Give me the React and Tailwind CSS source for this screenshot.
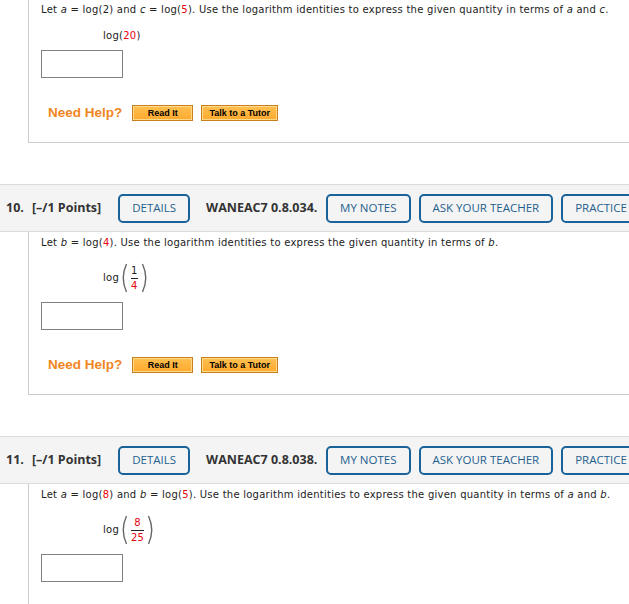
const BODY =
  "font-['DejaVu_Sans',sans-serif] text-[10px] leading-[12px] tracking-[0.25px] text-[#222]";
const HEAD = "font-['Open_Sans',sans-serif]";

const Red = ({ children }) => <span className="text-[#e8000b]">{children}</span>;
const V = ({ children }) => <i>{children}</i>;

const questions = [
  {
    id: 9,
    hideHeader: true,
    prompt: (
      <>
        Let <V>a</V> = log(2) and <V>c</V> = log(<Red>5</Red>). Use the logarithm
        identities to express the given quantity in terms of <V>a</V> and <V>c</V>.
      </>
    ),
    math: (
      <div className="mt-[14px] ml-[62px]">
        log(<Red>20</Red>)
      </div>
    ),
    inputGap: "mt-[8px]",
  },
  {
    id: 10,
    code: "WANEAC7 0.8.034.",
    prompt: (
      <>
        Let <V>b</V> = log(<Red>4</Red>). Use the logarithm identities to express
        the given quantity in terms of <V>b</V>.
      </>
    ),
    math: <Frac num="1" den={<Red>4</Red>} />,
    inputGap: "mt-[9px]",
  },
  {
    id: 11,
    code: "WANEAC7 0.8.038.",
    prompt: (
      <>
        Let <V>a</V> = log(<Red>8</Red>) and <V>b</V> = log(<Red>5</Red>). Use the
        logarithm identities to express the given quantity in terms of <V>a</V> and{" "}
        <V>b</V>.
      </>
    ),
    math: <Frac num={<Red>8</Red>} den={<Red>25</Red>} />,
    inputGap: "mt-[9px]",
    noHelp: true,
  },
];

function Paren({ right = false }) {
  return (
    <svg width="7" height="30" viewBox="0 0 7 30" className="shrink-0">
      <path
        d={right ? "M1.5 1 Q8 15 1.5 29" : "M5.5 1 Q-1 15 5.5 29"}
        fill="none"
        stroke="#666"
        strokeWidth="1.4"
      />
    </svg>
  );
}

function Frac({ num, den }) {
  return (
    <div className="mt-[14px] ml-[62px] flex h-[30px] items-center">
      <span className="mr-[2px]">log</span>
      <Paren />
      <div className="mx-[3px] flex flex-col items-center">
        <span className="leading-[12px]">{num}</span>
        <span className="my-[1px] h-px self-stretch bg-[#222]" />
        <span className="leading-[11px]">{den}</span>
      </div>
      <Paren right />
    </div>
  );
}

function OutlineBtn({ children, className = "" }) {
  return (
    <button
      className={`h-[29px] shrink-0 whitespace-nowrap rounded-[5px] border-2 border-[#19639a] px-3 text-[11.5px] text-[#255f8e] ${className}`}
    >
      {children}
    </button>
  );
}

function HelpBtn({ children, w }) {
  return (
    <button
      className={`${w} h-[16px] border border-[#c97f1c] bg-gradient-to-b from-[#ffc04f] to-[#ffa92c] p-0 shadow-[inset_0_0_0_1px_#ffd98c] font-['Liberation_Sans',sans-serif] text-[9px] font-bold leading-[14px] text-black`}
    >
      {children}
    </button>
  );
}

function Header({ q }) {
  return (
    <div className={`flex h-[48px] items-center border-y border-[#dcdcdc] bg-[#f4f4f4] pl-[6px] ${HEAD}`}>
      <span className="shrink-0 whitespace-nowrap text-[12.5px] font-bold text-[#333]">
        {q.id}.
      </span>
      <span className="ml-[8px] shrink-0 whitespace-nowrap text-[12.5px] font-bold text-[#333]">
        [–/1 Points]
      </span>
      <OutlineBtn className="ml-[17px]">DETAILS</OutlineBtn>
      <span className="ml-[16px] w-[112px] shrink-0 whitespace-nowrap text-[12.5px] font-bold text-[#333]">
        {q.code}
      </span>
      <OutlineBtn className="ml-[8px]">MY NOTES</OutlineBtn>
      <OutlineBtn className="ml-[8px]">ASK YOUR TEACHER</OutlineBtn>
      <OutlineBtn className="ml-[8px]">
        PRACTICE <span className="text-[#f0861e]">ANOTHER</span>
      </OutlineBtn>
    </div>
  );
}

function Question({ q }) {
  return (
    <section className={q.hideHeader ? "-mt-px" : "mt-[41px]"}>
      {!q.hideHeader && <Header q={q} />}
      <div className={`ml-[28px] border-l border-b border-[#cccccc] pl-3 pt-[5px] ${q.noHelp ? "pb-[40px]" : "pb-[21px]"} ${BODY}`}>
        <p className="whitespace-nowrap">{q.prompt}</p>
        {q.math}
        <div className={`${q.inputGap} h-[28px] w-[82px] border border-[#808080] bg-white`} />
        {!q.noHelp && (
          <div className="ml-[7px] mt-[27px] flex h-[16px] items-center tracking-normal">
            <span className="font-['Liberation_Sans',sans-serif] text-[13.5px] font-bold text-[#f0861e]">
              Need Help?
            </span>
            <div className="ml-[10px] flex gap-2">
              <HelpBtn w="w-[61px]">Read It</HelpBtn>
              <HelpBtn w="w-[77px]">Talk to a Tutor</HelpBtn>
            </div>
          </div>
        )}
      </div>
    </section>
  );
}

export default function App() {
  return (
    <div className="h-[604px] w-[629px] overflow-hidden bg-white">
      {questions.map((q) => (
        <Question key={q.id} q={q} />
      ))}
    </div>
  );
}
